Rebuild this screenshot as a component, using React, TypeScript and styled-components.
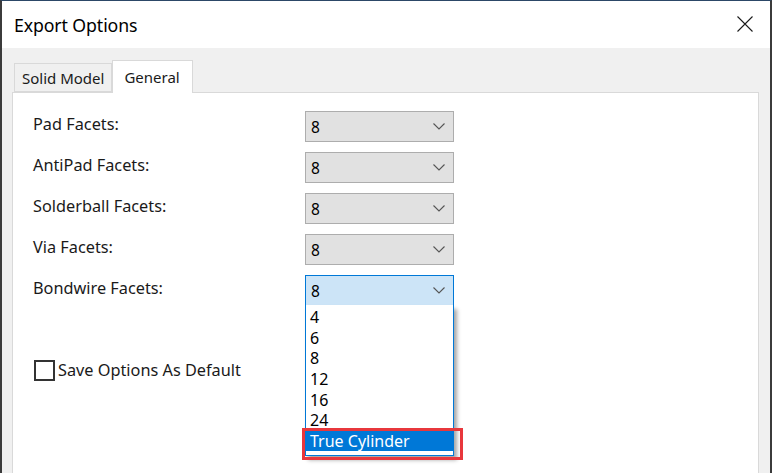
import React from 'react';
import styled, { createGlobalStyle } from 'styled-components';

const GlobalStyle = createGlobalStyle`
    html, body {
        margin: 0;
        padding: 0;
        background: #ffffff;
    }
    body {
        font-family: "Noto Sans", "Open Sans", sans-serif;
        color: #000000;
    }
`;

const Window = styled.div`
    width: 772px;
    height: 473px;
    box-sizing: border-box;
    display: flex;
    flex-direction: column;
    overflow: hidden;
    border-top: 1px solid #2c4867;
    border-left: 2px solid #3b3b3b;
    border-right: 2px solid #3b3b3b;
    background: #f0f0f0;
`;

const TitleBar = styled.div`
    height: 47px;
    flex: none;
    display: flex;
    align-items: center;
    justify-content: space-between;
    padding: 0 17px 0 12px;
    background: #ffffff;
`;

const Title = styled.div`
    font-size: 17.7px;
    letter-spacing: -0.1px;
`;

const CloseIcon = styled.svg`
    width: 16px;
    height: 16px;
    margin-top: -2px;
`;

const Body = styled.div`
    flex: 1;
    display: flex;
    flex-direction: column;
    padding: 12px 11px 0 10px;
`;

const TabRow = styled.div`
    height: 32px;
    display: flex;
    align-items: flex-end;
    padding-left: 2px;
    position: relative;
    z-index: 1;
`;

const Tab = styled.div<{ $active?: boolean }>`
    box-sizing: border-box;
    height: ${(p) => (p.$active ? '33px' : '29px')};
    margin-bottom: ${(p) => (p.$active ? '-1px' : '0')};
    padding: ${(p) => (p.$active ? '0 12px 0 11px' : '1px 7px 0 7px')};
    border: 1px solid #d9d9d9;
    border-bottom: ${(p) => (p.$active ? 'none' : '1px solid #d9d9d9')};
    background: ${(p) => (p.$active ? '#ffffff' : '#f0f0f0')};
    font-size: 15px;
    color: #1a1a1a;
    display: flex;
    align-items: center;
`;

const Panel = styled.div`
    flex: 1;
    background: #ffffff;
    border: 1px solid #d9d9d9;
    border-bottom: none;
    padding: 18px 0 0 20px;
    position: relative;
`;

const Form = styled.div`
    display: grid;
    grid-template-columns: 272px 149px;
    row-gap: 10px;
`;

const Label = styled.div`
    font-size: 16.3px;
    color: #1a1a1a;
    line-height: 22px;
    padding-top: 2px;
`;

const SelectBox = styled.div<{ $focused?: boolean }>`
    position: relative;
    box-sizing: border-box;
    height: 31px;
    display: flex;
    align-items: center;
    justify-content: space-between;
    padding: 0 8px 0 5px;
    background: ${(p) => (p.$focused ? '#cce4f7' : '#e1e1e1')};
    border: 1px solid ${(p) => (p.$focused ? '#0078d7' : '#adadad')};
    font-size: 15.5px;
`;

const Chevron = styled.svg`
    width: 12px;
    height: 7px;
`;

const List = styled.div`
    position: absolute;
    left: -1px;
    top: 100%;
    width: 149px;
    box-sizing: border-box;
    background: #ffffff;
    border: 1px solid #0078d7;
    border-top: none;
    box-shadow: 3px 4px 4px rgba(0, 0, 0, 0.35);
    padding: 2px 0 4px 0;
    z-index: 2;
`;

const Option = styled.div<{ $selected?: boolean }>`
    position: relative;
    height: 20.65px;
    line-height: 20.65px;
    padding-left: 4px;
    font-size: 16px;
    background: ${(p) => (p.$selected ? '#0078d7' : 'transparent')};
    color: ${(p) => (p.$selected ? '#ffffff' : '#000000')};
`;

const Highlight = styled.div`
    position: absolute;
    left: -4px;
    right: -10px;
    top: -3px;
    bottom: -9px;
    border: 3px solid #e8373c;
    pointer-events: none;
`;

const CheckRow = styled.label`
    display: flex;
    align-items: center;
    gap: 3px;
    margin-top: 53px;
    font-size: 16.3px;
    color: #1a1a1a;
`;

const CheckBox = styled.span`
    box-sizing: border-box;
    width: 21px;
    height: 21px;
    border: 2px solid #333333;
    background: #ffffff;
    margin-left: 1px;
`;

const fields = [
    { label: 'Pad Facets:', value: '8' },
    { label: 'AntiPad Facets:', value: '8' },
    { label: 'Solderball Facets:', value: '8' },
    { label: 'Via Facets:', value: '8' },
    { label: 'Bondwire Facets:', value: '8', open: true },
];

const options = ['4', '6', '8', '12', '16', '24', 'True Cylinder'];

const ArrowDown = () => (
    <Chevron viewBox="0 0 12 7">
        <polyline points="0.5,0.5 6,6 11.5,0.5" fill="none" stroke="#555555" strokeWidth="1.1" />
    </Chevron>
);

export default function App() {
    return (
        <>
            <GlobalStyle />
            <Window>
                <TitleBar>
                    <Title>Export Options</Title>
                    <CloseIcon viewBox="0 0 16 16">
                        <path d="M0.5 0.5 L15.5 15.5 M15.5 0.5 L0.5 15.5" stroke="#1a1a1a" strokeWidth="1.1" />
                    </CloseIcon>
                </TitleBar>
                <Body>
                    <TabRow>
                        <Tab>Solid Model</Tab>
                        <Tab $active>General</Tab>
                    </TabRow>
                    <Panel>
                        <Form>
                            {fields.map((f) => (
                                <React.Fragment key={f.label}>
                                    <Label>{f.label}</Label>
                                    <SelectBox $focused={f.open}>
                                        <span>{f.value}</span>
                                        <ArrowDown />
                                        {f.open && (
                                            <List>
                                                {options.map((o) => (
                                                    <Option key={o} $selected={o === 'True Cylinder'}>
                                                        {o}
                                                        {o === 'True Cylinder' && <Highlight />}
                                                    </Option>
                                                ))}
                                            </List>
                                        )}
                                    </SelectBox>
                                </React.Fragment>
                            ))}
                        </Form>
                        <CheckRow>
                            <CheckBox />
                            Save Options As Default
                        </CheckRow>
                    </Panel>
                </Body>
            </Window>
        </>
    );
}
